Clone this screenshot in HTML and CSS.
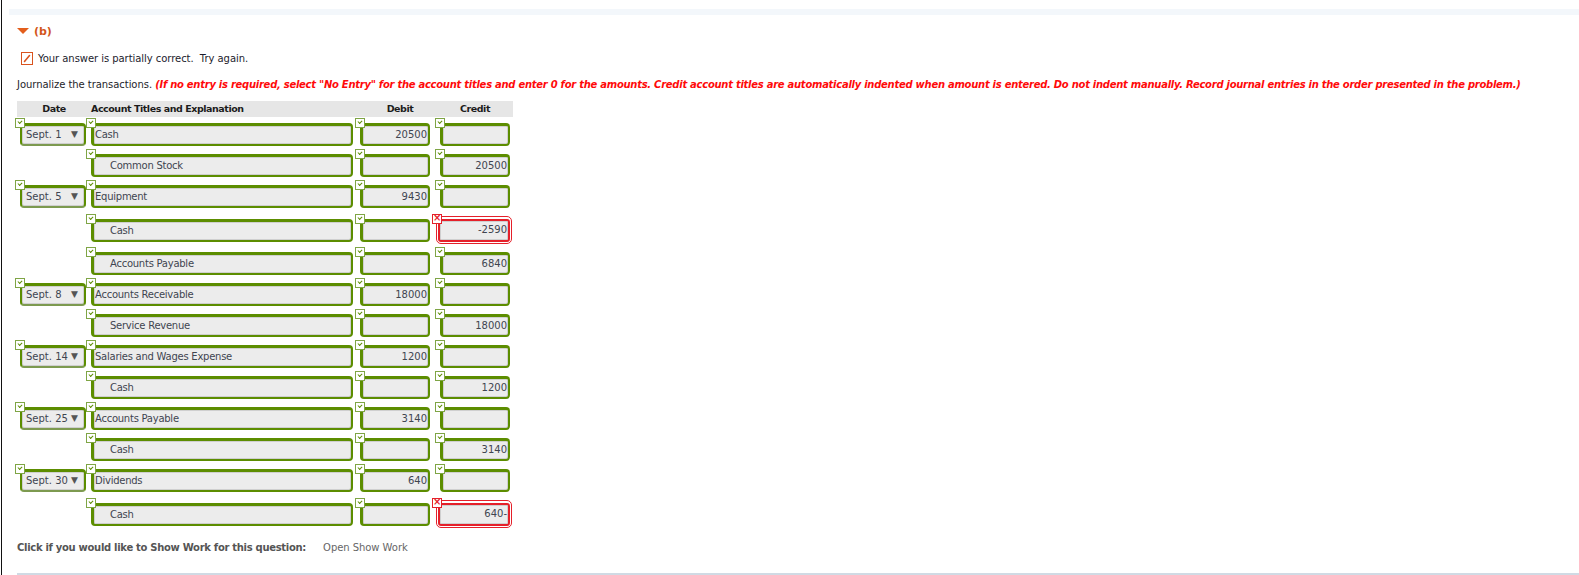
FILE: index.html
```html
<!DOCTYPE html>
<html>
<head>
<meta charset="utf-8">
<link rel="stylesheet" href="styles.css">
</head>
<body>
<div class="frame">
  <div class="topband"></div>
  <div class="part">
    <div class="part-head"><span class="tri"></span><span class="part-label">(b)</span></div>
    <div class="feedback">
      <span class="partial-icon"><svg width="12" height="13" viewBox="0 0 12 13"><rect x="0.5" y="0.5" width="11" height="12" fill="#fff" stroke="#d9531e"/><path d="M3.5 9.5 L8.5 3.5" stroke="#d9531e" stroke-width="1.6" stroke-linecap="round"/></svg></span>
      <span>Your answer is partially correct.&nbsp; Try again.</span>
    </div>
    <div class="instructions">Journalize the transactions. <em class="warn">(If no entry is required, select "No Entry" for the account titles and enter 0 for the amounts. Credit account titles are automatically indented when amount is entered. Do not indent manually. Record journal entries in the order presented in the problem.)</em></div>

    <div class="journal">
      <div class="jhead">
        <div class="h-date">Date</div>
        <div class="h-acct">Account Titles and Explanation</div>
        <div class="h-debit">Debit</div>
        <div class="h-credit">Credit</div>
      </div>

      <div class="jrow">
        <div class="cell c-date"><span class="tag"></span><div class="box sel"><span>Sept. 1</span><span class="arr">▼</span></div></div>
        <div class="cell c-acct"><span class="tag"></span><div class="box">Cash</div></div>
        <div class="cell c-debit"><span class="tag"></span><div class="box num">20500</div></div>
        <div class="cell c-credit"><span class="tag"></span><div class="box num"></div></div>
      </div>
      <div class="jrow">
        <div class="cell c-date empty"></div>
        <div class="cell c-acct"><span class="tag"></span><div class="box indent">Common Stock</div></div>
        <div class="cell c-debit"><span class="tag"></span><div class="box num"></div></div>
        <div class="cell c-credit"><span class="tag"></span><div class="box num">20500</div></div>
      </div>

      <div class="jrow">
        <div class="cell c-date"><span class="tag"></span><div class="box sel"><span>Sept. 5</span><span class="arr">▼</span></div></div>
        <div class="cell c-acct"><span class="tag"></span><div class="box">Equipment</div></div>
        <div class="cell c-debit"><span class="tag"></span><div class="box num">9430</div></div>
        <div class="cell c-credit"><span class="tag"></span><div class="box num"></div></div>
      </div>
      <div class="jrow">
        <div class="cell c-date empty"></div>
        <div class="cell c-acct"><span class="tag"></span><div class="box indent">Cash</div></div>
        <div class="cell c-debit"><span class="tag"></span><div class="box num"></div></div>
        <div class="cell c-credit err"><span class="tag x"></span><div class="errwrap"><div class="box num bad">-2590</div></div></div>
      </div>
      <div class="jrow">
        <div class="cell c-date empty"></div>
        <div class="cell c-acct"><span class="tag"></span><div class="box indent">Accounts Payable</div></div>
        <div class="cell c-debit"><span class="tag"></span><div class="box num"></div></div>
        <div class="cell c-credit"><span class="tag"></span><div class="box num">6840</div></div>
      </div>

      <div class="jrow">
        <div class="cell c-date"><span class="tag"></span><div class="box sel"><span>Sept. 8</span><span class="arr">▼</span></div></div>
        <div class="cell c-acct"><span class="tag"></span><div class="box">Accounts Receivable</div></div>
        <div class="cell c-debit"><span class="tag"></span><div class="box num">18000</div></div>
        <div class="cell c-credit"><span class="tag"></span><div class="box num"></div></div>
      </div>
      <div class="jrow">
        <div class="cell c-date empty"></div>
        <div class="cell c-acct"><span class="tag"></span><div class="box indent">Service Revenue</div></div>
        <div class="cell c-debit"><span class="tag"></span><div class="box num"></div></div>
        <div class="cell c-credit"><span class="tag"></span><div class="box num">18000</div></div>
      </div>

      <div class="jrow">
        <div class="cell c-date"><span class="tag"></span><div class="box sel"><span>Sept. 14</span><span class="arr">▼</span></div></div>
        <div class="cell c-acct"><span class="tag"></span><div class="box">Salaries and Wages Expense</div></div>
        <div class="cell c-debit"><span class="tag"></span><div class="box num">1200</div></div>
        <div class="cell c-credit"><span class="tag"></span><div class="box num"></div></div>
      </div>
      <div class="jrow">
        <div class="cell c-date empty"></div>
        <div class="cell c-acct"><span class="tag"></span><div class="box indent">Cash</div></div>
        <div class="cell c-debit"><span class="tag"></span><div class="box num"></div></div>
        <div class="cell c-credit"><span class="tag"></span><div class="box num">1200</div></div>
      </div>

      <div class="jrow">
        <div class="cell c-date"><span class="tag"></span><div class="box sel"><span>Sept. 25</span><span class="arr">▼</span></div></div>
        <div class="cell c-acct"><span class="tag"></span><div class="box">Accounts Payable</div></div>
        <div class="cell c-debit"><span class="tag"></span><div class="box num">3140</div></div>
        <div class="cell c-credit"><span class="tag"></span><div class="box num"></div></div>
      </div>
      <div class="jrow">
        <div class="cell c-date empty"></div>
        <div class="cell c-acct"><span class="tag"></span><div class="box indent">Cash</div></div>
        <div class="cell c-debit"><span class="tag"></span><div class="box num"></div></div>
        <div class="cell c-credit"><span class="tag"></span><div class="box num">3140</div></div>
      </div>

      <div class="jrow">
        <div class="cell c-date"><span class="tag"></span><div class="box sel"><span>Sept. 30</span><span class="arr">▼</span></div></div>
        <div class="cell c-acct"><span class="tag"></span><div class="box">Dividends</div></div>
        <div class="cell c-debit"><span class="tag"></span><div class="box num">640</div></div>
        <div class="cell c-credit"><span class="tag"></span><div class="box num"></div></div>
      </div>
      <div class="jrow">
        <div class="cell c-date empty"></div>
        <div class="cell c-acct"><span class="tag"></span><div class="box indent">Cash</div></div>
        <div class="cell c-debit"><span class="tag"></span><div class="box num"></div></div>
        <div class="cell c-credit err"><span class="tag x"></span><div class="errwrap"><div class="box num bad">640-</div></div></div>
      </div>
    </div>

    <div class="showwork"><span class="sw-label">Click if you would like to Show Work for this question:</span><span class="sw-link">Open Show Work</span></div>
  </div>
  <div class="bottomline"></div>
</div>
</body>
</html>
```
FILE: styles.css
```css
html, body {
  margin: 0;
  padding: 0;
  background: #fff;
}
body {
  font-family: "DejaVu Sans", Verdana, sans-serif;
  font-size: 10px;
  letter-spacing: -0.05px;
  color: #222;
}
.frame {
  margin-left: 1px;
  border-left: 1px solid #111;
  height: 575px;
  box-sizing: border-box;
  overflow: hidden;
}
.topband {
  margin-top: 9px;
  margin-left: 7px;
  height: 6px;
  background: #f3f7fb;
}
.part {
  padding-left: 15px;
}
.part-head {
  display: flex;
  align-items: center;
  height: 16px;
  margin-top: 8px;
}
.tri {
  width: 0;
  height: 0;
  border-left: 6px solid transparent;
  border-right: 6px solid transparent;
  border-top: 6px solid #e35e1c;
  margin-right: 5px;
}
.part-label {
  color: #d2561a;
  font-weight: bold;
  font-size: 11px;
}
.feedback {
  display: flex;
  align-items: center;
  height: 14px;
  margin-top: 12px;
  padding-left: 4px;
  color: #1c1c2c;
}
.partial-icon {
  display: flex;
  margin-right: 5px;
}
.instructions {
  margin-top: 13px;
  height: 14px;
  line-height: 14px;
  white-space: nowrap;
  color: #1e1e2a;
}
.warn {
  color: #ff0a0a;
  font-weight: bold;
  font-style: italic;
  letter-spacing: -0.27px;
}
.journal {
  margin-top: 9px;
  width: 496px;
}
.jhead {
  display: flex;
  height: 16px;
  line-height: 16px;
  background: #e6e6e6;
  font-weight: bold;
  font-size: 9.5px;
  letter-spacing: -0.45px;
  color: #1c1c1c;
}
.h-date {
  width: 74px;
  text-align: center;
}
.h-acct {
  width: 269px;
}
.h-debit {
  width: 80px;
  text-align: center;
}
.h-credit {
  width: 70px;
  text-align: center;
}
.jrow {
  display: flex;
  align-items: center;
  margin-top: 8px;
}
.jhead + .jrow {
  margin-top: 6px;
}
.cell {
  position: relative;
  height: 23px;
}
.c-date {
  width: 66px;
  margin-left: 3px;
}
.c-acct {
  width: 262px;
  margin-left: 5px;
}
.c-debit {
  width: 70px;
  margin-left: 7px;
}
.c-credit {
  width: 70px;
  margin-left: 10px;
}
.c-credit.err {
  height: 28px;
}
.box {
  box-sizing: border-box;
  height: 23px;
  width: 100%;
  border: 2px solid #5c8d00;
  border-top-width: 3px;
  border-left-width: 3px;
  border-radius: 4px;
  background: #ececec;
  box-shadow: inset 0 0 0 1px #cfcfcf;
  color: #3f4550;
  line-height: 17px;
  padding: 0 1px;
  letter-spacing: -0.25px;
  white-space: nowrap;
  overflow: hidden;
}
.box.indent {
  padding-left: 16px;
}
.box.num {
  text-align: right;
  padding-right: 1px;
  letter-spacing: 0;
}
.box.sel {
  display: flex;
  justify-content: space-between;
  padding: 0 6px 0 4px;
  border-width: 2px;
  border-top-width: 3px;
  border-bottom-color: #7d9a50;
  letter-spacing: 0;
}
.arr {
  font-size: 9px;
  color: #555;
}
.errwrap {
  box-sizing: border-box;
  margin-left: -4px;
  width: 76px;
  height: 28px;
  border: 1px solid #e5202a;
  border-radius: 5px;
  padding: 2px 1px 1px;
}
.box.bad {
  border: 2px solid #e5202a;
  border-radius: 3px;
}
.tag {
  position: absolute;
  left: -5px;
  top: -5px;
  width: 10px;
  height: 10px;
  box-sizing: border-box;
  border: 1px solid #7fa545;
  background: #fff;
  z-index: 2;
}
.tag::after {
  content: "";
  position: absolute;
  left: 2px;
  top: 1px;
  width: 3px;
  height: 2px;
  border-left: 1.5px solid #5c8d00;
  border-bottom: 1.5px solid #5c8d00;
  transform: rotate(-45deg);
}
.err .tag {
  left: -8px;
  top: -2px;
}
.tag.x {
  border-color: #e5202a;
}
.tag.x::after {
  content: "×";
  border: none;
  transform: none;
  left: 0;
  top: -3px;
  width: 8px;
  height: 8px;
  color: #e5202a;
  font-weight: bold;
  font-size: 10px;
  line-height: 12px;
  text-align: center;
}
.c-date.empty {
  height: 23px;
}
.showwork {
  margin-top: 13px;
  height: 14px;
  line-height: 14px;
  color: #555;
}
.sw-label {
  font-weight: bold;
  letter-spacing: -0.3px;
  margin-right: 17px;
}
.sw-link {
  color: #666;
}
.bottomline {
  margin-top: 18px;
  margin-left: 15px;
  height: 2px;
  background: #d0dae4;
}
```
